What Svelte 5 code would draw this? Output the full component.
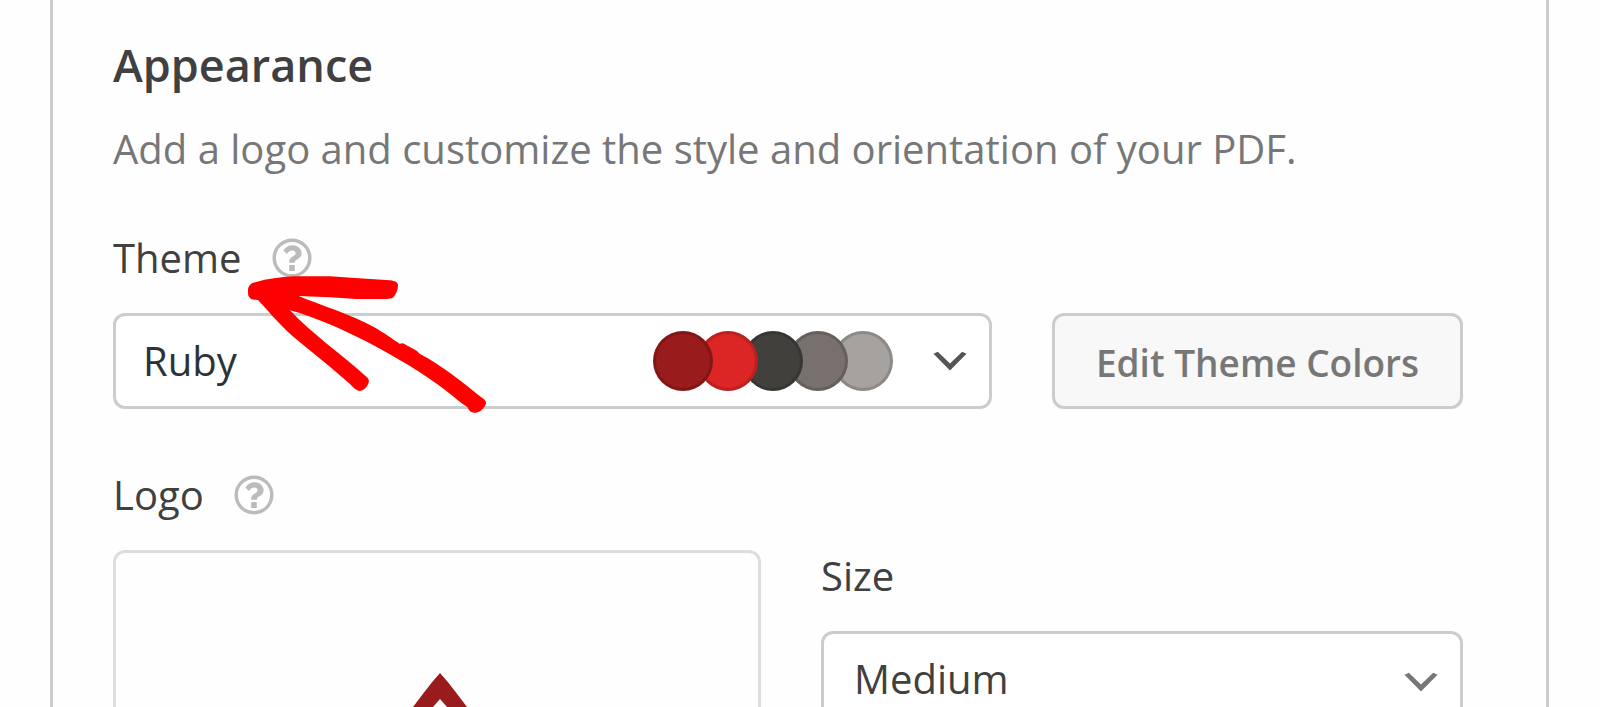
<script lang="ts">
  const swatches = ['#991b1b', '#dc2626', '#42403d', '#78706c', '#a5a29f'];

  let theme = 'Ruby';
  let size = 'Medium';
</script>

{#snippet help(topic: string)}
  <button type="button" class="help" aria-label="Help: {topic}">
    <svg viewBox="0 0 40 40" width="40" height="40" aria-hidden="true">
      <circle cx="20" cy="20" r="17.8" fill="none" stroke="currentColor" stroke-width="3.4" />
      <path
        d="M11.4 12.8C13.4 9.2 16.4 7.3 20.6 7.3C25.4 7.3 29.6 10.6 29.6 15.2C29.6 21.2 22.9 21.2 22.9 24V24.8H17.2V23.4C17.2 18.8 23.6 18.4 23.6 15.4C23.6 13.6 22.2 12.6 20.3 12.6C18.2 12.6 17 13.6 15 16Z"
        fill="currentColor"
      />
      <rect x="17.2" y="27" width="5.6" height="6" rx="0.6" fill="currentColor" />
    </svg>
  </button>
{/snippet}

{#snippet chevron()}
  <svg class="chevron" viewBox="0 0 34 20" width="34" height="20" aria-hidden="true">
    <path d="M0.5 2.8L4.8 0.8L17 12.6L29.2 0.8L33.5 2.8L17 19.5Z" fill="currentColor" />
  </svg>
{/snippet}

<main>
  <section class="card">
    <h2>Appearance</h2>
    <p>Add a logo and customize the style and orientation of your PDF.</p>

    <div class="row theme-row">
      <div class="field">
        <div class="label">
          <label for="theme">Theme</label>
          {@render help('Theme')}
        </div>
        <div class="select dark">
          <select id="theme" bind:value={theme}>
            <option>Ruby</option>
          </select>
          <div class="adornment">
            <div class="swatches">
              {#each swatches as color}
                <span class="swatch" style="background-color: {color}"></span>
              {/each}
            </div>
            {@render chevron()}
          </div>
        </div>
        <svg class="arrow" viewBox="0 0 780 570" width="260" height="190" aria-hidden="true">
          <path
            d="M24 178C26 165 36 158 46 157C82 146 122 141 160 139L270 139L345 144L450 151C466 153 473 157 474 165C474 181 468 192 461 201C456 206 448 206 440 207L350 207L270 202L176 198C240 225 333 253 400 290C434 309 456 326 479 341L489 340L530 362L540 372C607 406 672 461 731 507C739 513 740 521 735 527C728 540 716 548 704 548C694 549 687 543 682 531C660 518 643 501 623 486C548 427 465 381 388 339C309 299 228 262 150 241C214 310 299 369 380 441C388 448 388 455 384 463C378 475 370 483 358 483C347 481 340 472 330 462L268 409L178 335C129 296 93 252 54 210C44 209 37 211 31 205C23 200 24 189 24 178Z"
            fill="#ff0000"
          />
        </svg>
      </div>
      <button type="button" class="edit">Edit Theme Colors</button>
    </div>

    <div class="row logo-row">
      <div class="field">
        <div class="label">
          <span>Logo</span>
          {@render help('Logo')}
        </div>
        <div class="preview">
          <svg viewBox="0 0 120 110" width="120" height="110" role="img" aria-label="Logo">
            <path
              d="M60 0C50 11 42 22 33 34L4 88C-2 100 4 108 16 108H104C116 108 122 100 116 88L87 34C78 22 70 11 60 0ZM60 26L67 34L98 90H22L53 34Z"
              fill="#991b1e"
              fill-rule="evenodd"
            />
          </svg>
        </div>
      </div>
      <div class="field size">
        <div class="label">
          <label for="size">Size</label>
        </div>
        <div class="select">
          <select id="size" bind:value={size}>
            <option>Medium</option>
          </select>
          <div class="adornment">
            {@render chevron()}
          </div>
        </div>
      </div>
    </div>
  </section>
</main>

<style>
  :global(body) {
    margin: 0;
    background-color: #fefefe;
  }

  main {
    display: flex;
    box-sizing: border-box;
    height: 100vh;
    overflow: hidden;
    padding: 0 51px 0 50px;
    color: #404040;
    font-family: 'Segoe UI', 'Open Sans', 'Noto Sans', sans-serif;
    font-size: 40px;
    line-height: 50px;
  }

  .card {
    flex: 1;
    box-sizing: border-box;
    height: max-content;
    min-width: 0;
    padding: 35px 83px 60px 60px;
    border: 3px solid #cccccc;
    border-width: 0 3px;
  }

  h2 {
    margin: 0 0 29px;
    font-size: 45px;
    font-weight: 600;
    line-height: 60px;
  }

  p {
    margin: 0 0 59px;
    color: #777777;
  }

  .row {
    display: grid;
    column-gap: 60px;
  }

  .theme-row {
    grid-template-columns: 879fr 411fr;
    align-items: end;
    margin-bottom: 61px;
  }

  .logo-row {
    grid-template-columns: 648fr 642fr;
  }

  .field {
    position: relative;
    min-width: 0;
  }

  .size {
    padding-top: 81px;
  }

  .label {
    display: flex;
    align-items: center;
    gap: 30px;
    margin-bottom: 30px;
  }

  .help {
    display: flex;
    padding: 0;
    border: none;
    background: none;
    color: #bbbbbb;
    cursor: pointer;
  }

  .select {
    position: relative;
    color: #777777;
  }

  .dark {
    color: #555555;
  }

  select {
    appearance: none;
    display: block;
    box-sizing: border-box;
    width: 100%;
    height: 96px;
    padding: 0 30px;
    border: 3px solid #cccccc;
    border-radius: 12px;
    background-color: #ffffff;
    color: #404040;
    font: inherit;
  }

  .dark select {
    padding: 0 27px;
    color: #2c3338;
  }

  .adornment {
    position: absolute;
    top: 6px;
    right: 25px;
    bottom: 0;
    display: flex;
    align-items: center;
    gap: 40px;
    pointer-events: none;
  }

  .dark .adornment {
    top: 0;
  }

  .swatches {
    display: flex;
    isolation: isolate;
  }

  .swatch {
    position: relative;
    box-sizing: border-box;
    width: 60px;
    height: 60px;
    border: 3px solid rgba(0, 0, 0, 0.15);
    border-radius: 50%;
  }

  .swatch + .swatch {
    margin-left: -15px;
  }

  .swatch:nth-child(1) {
    z-index: 5;
  }

  .swatch:nth-child(2) {
    z-index: 4;
  }

  .swatch:nth-child(3) {
    z-index: 3;
  }

  .swatch:nth-child(4) {
    z-index: 2;
  }

  .edit {
    box-sizing: border-box;
    height: 96px;
    padding: 4px 0 0;
    border: 3px solid #cccccc;
    border-radius: 12px;
    background-color: #f8f8f8;
    color: #777777;
    font: inherit;
    font-size: 37px;
    font-weight: 600;
    white-space: nowrap;
    cursor: pointer;
  }

  .arrow {
    position: absolute;
    top: -3px;
    left: 127px;
    pointer-events: none;
  }

  .preview {
    display: flex;
    box-sizing: border-box;
    justify-content: center;
    height: 360px;
    padding: 120px 0 0 6px;
    border: 3px solid #dddddd;
    border-radius: 12px;
  }
</style>
